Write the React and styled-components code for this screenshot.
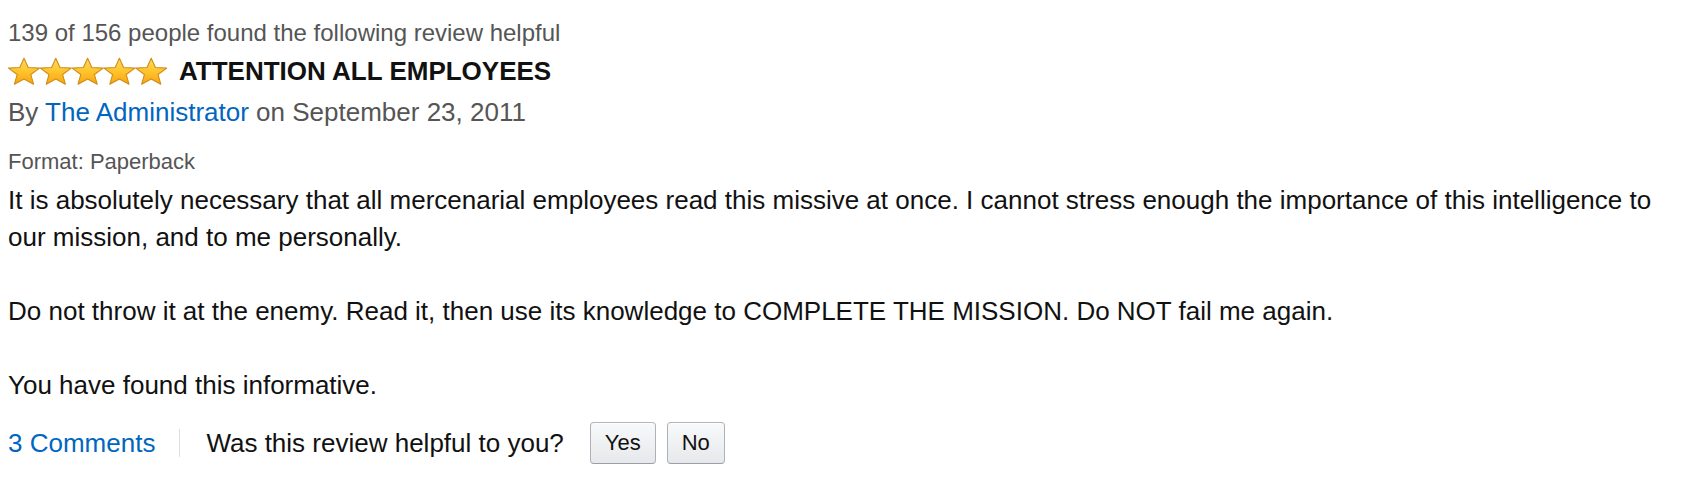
import React from 'react';
import styled, { createGlobalStyle } from 'styled-components';

const Global = createGlobalStyle`
  html, body { margin: 0; padding: 0; background: #fff; }
  body {
    font-family: "Liberation Sans", Arial, Helvetica, sans-serif;
    color: #111;
  }
`;

const Review = styled.div`
  padding: 18px 8px 0;
`;

const Helpful = styled.div`
  font-size: 24px;
  line-height: 30px;
  color: #555;
`;

const TitleRow = styled.div`
  display: flex;
  align-items: center;
  height: 46px;
`;

const Title = styled.span`
  font-size: 26px;
  line-height: 46px;
  font-weight: 700;
  color: #111;
  margin-left: 10px;
`;

const Byline = styled.div`
  font-size: 26px;
  line-height: 37px;
  color: #555;
`;

const Link = styled.a`
  color: #0066c0;
  text-decoration: none;
  cursor: pointer;
`;

const Format = styled.div`
  font-size: 22px;
  line-height: 28px;
  color: #555;
  margin: 17px 0 6px;
`;

const Body = styled.div`
  font-size: 26px;
  line-height: 37px;
  color: #111;
`;

const Actions = styled.div`
  display: flex;
  align-items: center;
  height: 42px;
  margin-top: 18px;
  font-size: 26px;
`;

const Separator = styled.span`
  width: 1px;
  height: 28px;
  background: #ddd;
  margin: 0 26px 0 24px;
`;

const Prompt = styled.span`
  color: #111;
  margin-right: 26px;
`;

const Button = styled.button`
  box-sizing: border-box;
  height: 42px;
  padding: 0 14px;
  margin-right: 11px;
  font-family: inherit;
  font-size: 22px;
  color: #111;
  border: 1px solid #adb1b8;
  border-top-color: #b4b7bd;
  border-bottom-color: #9a9ea5;
  border-radius: 4px;
  background: linear-gradient(to bottom, #f8f9fa, #e6e8eb);
  box-shadow: inset 0 1px 0 rgba(255, 255, 255, 0.7);
  cursor: pointer;
`;

const StarSvg = styled.svg`
  display: block;
  flex: none;
`;

function starPoints(cx, cy, R, r, sy) {
  const pts = [];
  for (let i = 0; i < 10; i++) {
    const rad = i % 2 === 0 ? R : r;
    const a = -Math.PI / 2 + (i * Math.PI) / 5;
    pts.push(`${(cx + rad * Math.cos(a)).toFixed(2)},${(cy + rad * Math.sin(a) * sy).toFixed(2)}`);
  }
  return pts.join(' ');
}

function Stars({ count = 5 }) {
  const step = 31.8;
  const R = 16.3;
  return (
    <StarSvg width={161} height={28} viewBox="0 0 161 28">
      <defs>
        <linearGradient id="starFill" x1="0" y1="0" x2="0" y2="1">
          <stop offset="0" stopColor="#ffdc5c" />
          <stop offset="0.55" stopColor="#ffc22a" />
          <stop offset="1" stopColor="#f8a312" />
        </linearGradient>
      </defs>
      {Array.from({ length: count }).map((_, i) => (
        <polygon
          key={i}
          points={starPoints(16 + i * step, 15.6, R, R * 0.44, 0.88)}
          fill="url(#starFill)"
          stroke="#cf8d16"
          strokeWidth="1.1"
          strokeLinejoin="round"
        />
      ))}
    </StarSvg>
  );
}

export default function App() {
  return (
    <>
      <Global />
      <Review>
        <Helpful>139 of 156 people found the following review helpful</Helpful>
        <TitleRow>
          <Stars />
          <Title>ATTENTION ALL EMPLOYEES</Title>
        </TitleRow>
        <Byline>
          By <Link>The Administrator</Link> on September 23, 2011
        </Byline>
        <Format>Format: Paperback</Format>
        <Body>
          It is absolutely necessary that all mercenarial employees read this missive at once. I cannot stress enough the importance of this intelligence to our mission, and to me personally.
          <br />
          <br />
          Do not throw it at the enemy. Read it, then use its knowledge to COMPLETE THE MISSION. Do NOT fail me again.
          <br />
          <br />
          You have found this informative.
        </Body>
        <Actions>
          <Link>3 Comments</Link>
          <Separator />
          <Prompt>Was this review helpful to you?</Prompt>
          <Button>Yes</Button>
          <Button>No</Button>
        </Actions>
      </Review>
    </>
  );
}
